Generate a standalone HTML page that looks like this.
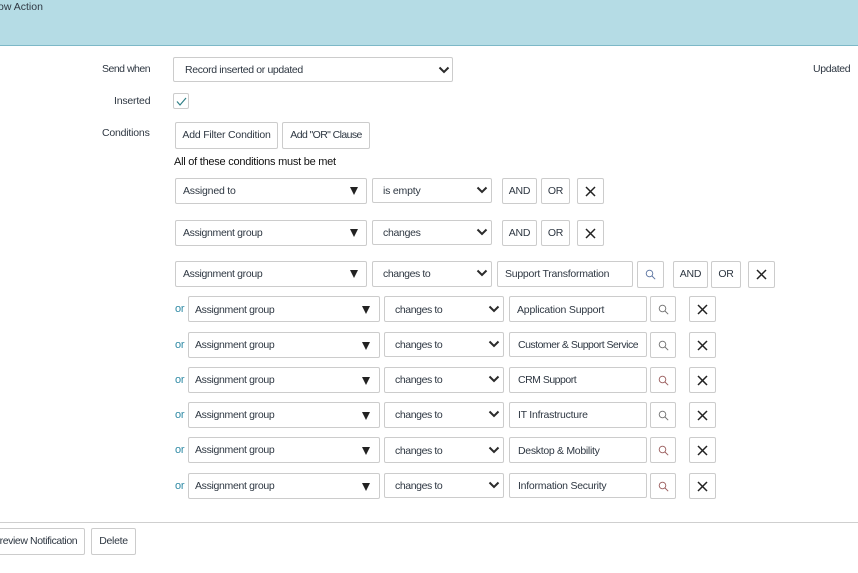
<!DOCTYPE html>
<html><head><meta charset="utf-8"><style>
html,body{margin:0;padding:0;background:#fff;width:858px;height:573px;overflow:hidden}
body{position:relative;font-family:"Liberation Sans",sans-serif;font-size:10.5px;color:#2e3742;letter-spacing:-.2px}
.a,.b,.t,svg{position:absolute}
.b{box-sizing:border-box;border:1px solid #cccccc;border-radius:2px;background:#fff;white-space:nowrap;overflow:hidden}
.t{white-space:nowrap;line-height:14px}
.c{text-align:center}
.ag{letter-spacing:-.33px}
.ch{letter-spacing:-.4px}
.o{color:#2f8aa5;font-size:11px}
</style></head><body>
<div class="a" style="left:0;top:0;width:858px;height:46px;box-sizing:border-box;background:#b5dce5;border-bottom:1px solid #7db8c7"></div>
<div class="t" style="left:-2px;top:0;letter-spacing:0">ow Action</div>
<div class="t" style="left:102px;top:62px;letter-spacing:-.5px">Send when</div>
<div class="t" style="left:114px;top:94px">Inserted</div>
<div class="t" style="left:102px;top:126px">Conditions</div>
<div class="t" style="left:813px;top:62px;letter-spacing:-.35px">Updated</div>

<div class="b" style="left:173px;top:57px;width:280px;height:25px"></div>
<div class="t" style="left:185px;top:63px;letter-spacing:-.36px">Record inserted or updated</div>
<svg style="left:438px;top:66px" width="12" height="8"><path d="M1.5 1.5L6 6l4.5-4.5" fill="none" stroke="#2b2b2b" stroke-width="2"/></svg>

<div class="b" style="left:173px;top:93px;width:16px;height:16px"></div>
<svg style="left:175px;top:96px" width="13" height="11"><path d="M2 5.5L5 9l6-7" fill="none" stroke="#2f7f86" stroke-width="1.2"/></svg>

<div class="b c" style="left:175px;top:122px;width:103px;height:27px;line-height:25px">Add Filter Condition</div>
<div class="b c" style="left:282px;top:122px;width:88px;height:27px;line-height:25px;letter-spacing:-.6px">Add "OR" Clause</div>
<div class="t" style="left:174px;top:155px;color:#111;font-size:11px;letter-spacing:-.25px">All of these conditions must be met</div>

<!-- Row 1 -->
<div class="b" style="left:175px;top:178px;width:192px;height:26px"></div><div class="t" style="left:183px;top:184px">Assigned to</div>
<svg style="left:349px;top:187px" width="10" height="8"><path d="M1 0h8L5 8z" fill="#222"/></svg>
<div class="b" style="left:372px;top:178px;width:120px;height:25px"></div><div class="t" style="left:383px;top:184px">is empty</div>
<svg style="left:476px;top:186px" width="12" height="8"><path d="M1.5 1.5L6 6l4.5-4.5" fill="none" stroke="#2b2b2b" stroke-width="2"/></svg>
<div class="b c" style="left:502px;top:178px;width:35px;height:26px;line-height:24px">AND</div>
<div class="b c" style="left:541px;top:178px;width:29px;height:26px;line-height:24px">OR</div>
<div class="b" style="left:577px;top:178px;width:27px;height:26px"></div>
<svg style="left:585px;top:186px" width="11" height="11"><path d="M1 1l9 9M10 1l-9 9" stroke="#222" stroke-width="1.5"/></svg>

<!-- Row 2 -->
<div class="b" style="left:175px;top:220px;width:192px;height:26px"></div><div class="t ag" style="left:183px;top:226px">Assignment group</div>
<svg style="left:349px;top:229px" width="10" height="8"><path d="M1 0h8L5 8z" fill="#222"/></svg>
<div class="b" style="left:372px;top:220px;width:120px;height:25px"></div><div class="t" style="left:383px;top:226px;letter-spacing:-.3px">changes</div>
<svg style="left:476px;top:228px" width="12" height="8"><path d="M1.5 1.5L6 6l4.5-4.5" fill="none" stroke="#2b2b2b" stroke-width="2"/></svg>
<div class="b c" style="left:502px;top:220px;width:35px;height:26px;line-height:24px">AND</div>
<div class="b c" style="left:541px;top:220px;width:29px;height:26px;line-height:24px">OR</div>
<div class="b" style="left:577px;top:220px;width:27px;height:26px"></div>
<svg style="left:585px;top:228px" width="11" height="11"><path d="M1 1l9 9M10 1l-9 9" stroke="#222" stroke-width="1.5"/></svg>

<!-- Row 3 -->
<div class="b" style="left:175px;top:261px;width:192px;height:26px"></div><div class="t ag" style="left:183px;top:267px">Assignment group</div>
<svg style="left:349px;top:270px" width="10" height="8"><path d="M1 0h8L5 8z" fill="#222"/></svg>
<div class="b" style="left:372px;top:261px;width:120px;height:26px"></div><div class="t ch" style="left:383px;top:267px">changes to</div>
<svg style="left:476px;top:269px" width="12" height="8"><path d="M1.5 1.5L6 6l4.5-4.5" fill="none" stroke="#2b2b2b" stroke-width="2"/></svg>
<div class="b" style="left:497px;top:261px;width:136px;height:26px"></div><div class="t" style="left:505px;top:267px;letter-spacing:-.25px">Support Transformation</div>
<div class="b" style="left:637px;top:261px;width:27px;height:27px"></div>
<svg style="left:645px;top:269px" width="11" height="11"><circle cx="4.5" cy="4.5" r="3.3" fill="none" stroke="#5a73a0" stroke-width=".9"/><path d="M7 7l3.2 3.2" stroke="#5a73a0" stroke-width=".9"/></svg>
<div class="b c" style="left:673px;top:261px;width:35px;height:27px;line-height:25px">AND</div>
<div class="b c" style="left:711px;top:261px;width:30px;height:27px;line-height:25px">OR</div>
<div class="b" style="left:748px;top:261px;width:27px;height:27px"></div>
<svg style="left:756px;top:269px" width="11" height="11"><path d="M1 1l9 9M10 1l-9 9" stroke="#222" stroke-width="1.5"/></svg>

<!-- Row 4 -->
<div class="t o" style="left:175px;top:302px">or</div>
<div class="b" style="left:188px;top:296px;width:192px;height:26px"></div><div class="t ag" style="left:195px;top:303px">Assignment group</div>
<svg style="left:361px;top:306px" width="10" height="8"><path d="M1 0h8L5 8z" fill="#222"/></svg>
<div class="b" style="left:384px;top:296px;width:120px;height:26px"></div><div class="t ch" style="left:395px;top:303px">changes to</div>
<svg style="left:488px;top:305px" width="12" height="8"><path d="M1.5 1.5L6 6l4.5-4.5" fill="none" stroke="#2b2b2b" stroke-width="2"/></svg>
<div class="b" style="left:509px;top:296px;width:138px;height:26px"></div><div class="t" style="left:517px;top:303px">Application Support</div>
<div class="b" style="left:650px;top:296px;width:26px;height:26px"></div>
<svg style="left:658px;top:304px" width="11" height="11"><circle cx="4.5" cy="4.5" r="3.3" fill="none" stroke="#707070" stroke-width=".9"/><path d="M7 7l3.2 3.2" stroke="#707070" stroke-width=".9"/></svg>
<div class="b" style="left:689px;top:296px;width:27px;height:26px"></div>
<svg style="left:697px;top:304px" width="11" height="11"><path d="M1 1l9 9M10 1l-9 9" stroke="#222" stroke-width="1.5"/></svg>

<!-- Row 5 -->
<div class="t o" style="left:175px;top:338px">or</div>
<div class="b" style="left:188px;top:332px;width:192px;height:26px"></div><div class="t ag" style="left:195px;top:338px">Assignment group</div>
<svg style="left:361px;top:342px" width="10" height="8"><path d="M1 0h8L5 8z" fill="#222"/></svg>
<div class="b" style="left:384px;top:332px;width:120px;height:25px"></div><div class="t ch" style="left:395px;top:338px">changes to</div>
<svg style="left:488px;top:340px" width="12" height="8"><path d="M1.5 1.5L6 6l4.5-4.5" fill="none" stroke="#2b2b2b" stroke-width="2"/></svg>
<div class="b" style="left:509px;top:332px;width:138px;height:25px"></div><div class="t" style="left:518px;top:338px;width:120px;overflow:hidden;letter-spacing:-.5px">Customer &amp; Support Services</div>
<div class="b" style="left:650px;top:332px;width:26px;height:26px"></div>
<svg style="left:658px;top:340px" width="11" height="11"><circle cx="4.5" cy="4.5" r="3.3" fill="none" stroke="#707070" stroke-width=".9"/><path d="M7 7l3.2 3.2" stroke="#707070" stroke-width=".9"/></svg>
<div class="b" style="left:689px;top:332px;width:27px;height:26px"></div>
<svg style="left:697px;top:340px" width="11" height="11"><path d="M1 1l9 9M10 1l-9 9" stroke="#222" stroke-width="1.5"/></svg>

<!-- Row 6 -->
<div class="t o" style="left:175px;top:373px">or</div>
<div class="b" style="left:188px;top:367px;width:192px;height:26px"></div><div class="t ag" style="left:195px;top:373px">Assignment group</div>
<svg style="left:361px;top:377px" width="10" height="8"><path d="M1 0h8L5 8z" fill="#222"/></svg>
<div class="b" style="left:384px;top:367px;width:120px;height:26px"></div><div class="t ch" style="left:395px;top:373px">changes to</div>
<svg style="left:488px;top:375px" width="12" height="8"><path d="M1.5 1.5L6 6l4.5-4.5" fill="none" stroke="#2b2b2b" stroke-width="2"/></svg>
<div class="b" style="left:509px;top:367px;width:138px;height:26px"></div><div class="t" style="left:518px;top:373px;letter-spacing:-.5px">CRM Support</div>
<div class="b" style="left:650px;top:367px;width:26px;height:26px"></div>
<svg style="left:658px;top:375px" width="11" height="11"><circle cx="4.5" cy="4.5" r="3.3" fill="none" stroke="#9a5c5c" stroke-width=".9"/><path d="M7 7l3.2 3.2" stroke="#9a5c5c" stroke-width=".9"/></svg>
<div class="b" style="left:689px;top:367px;width:27px;height:26px"></div>
<svg style="left:697px;top:375px" width="11" height="11"><path d="M1 1l9 9M10 1l-9 9" stroke="#222" stroke-width="1.5"/></svg>

<!-- Row 7 -->
<div class="t o" style="left:175px;top:408px">or</div>
<div class="b" style="left:188px;top:402px;width:192px;height:26px"></div><div class="t ag" style="left:195px;top:408px">Assignment group</div>
<svg style="left:361px;top:412px" width="10" height="8"><path d="M1 0h8L5 8z" fill="#222"/></svg>
<div class="b" style="left:384px;top:402px;width:120px;height:26px"></div><div class="t ch" style="left:395px;top:408px">changes to</div>
<svg style="left:488px;top:410px" width="12" height="8"><path d="M1.5 1.5L6 6l4.5-4.5" fill="none" stroke="#2b2b2b" stroke-width="2"/></svg>
<div class="b" style="left:509px;top:402px;width:138px;height:26px"></div><div class="t" style="left:518px;top:408px;letter-spacing:-.25px">IT Infrastructure</div>
<div class="b" style="left:650px;top:402px;width:26px;height:26px"></div>
<svg style="left:658px;top:410px" width="11" height="11"><circle cx="4.5" cy="4.5" r="3.3" fill="none" stroke="#707070" stroke-width=".9"/><path d="M7 7l3.2 3.2" stroke="#707070" stroke-width=".9"/></svg>
<div class="b" style="left:689px;top:402px;width:27px;height:26px"></div>
<svg style="left:697px;top:410px" width="11" height="11"><path d="M1 1l9 9M10 1l-9 9" stroke="#222" stroke-width="1.5"/></svg>

<!-- Row 8 -->
<div class="t o" style="left:175px;top:443px">or</div>
<div class="b" style="left:188px;top:437px;width:192px;height:26px"></div><div class="t ag" style="left:195px;top:443px">Assignment group</div>
<svg style="left:361px;top:447px" width="10" height="8"><path d="M1 0h8L5 8z" fill="#222"/></svg>
<div class="b" style="left:384px;top:437px;width:120px;height:26px"></div><div class="t ch" style="left:395px;top:444px">changes to</div>
<svg style="left:488px;top:446px" width="12" height="8"><path d="M1.5 1.5L6 6l4.5-4.5" fill="none" stroke="#2b2b2b" stroke-width="2"/></svg>
<div class="b" style="left:509px;top:437px;width:138px;height:26px"></div><div class="t" style="left:518px;top:444px;letter-spacing:-.3px">Desktop &amp; Mobility</div>
<div class="b" style="left:650px;top:437px;width:26px;height:26px"></div>
<svg style="left:658px;top:445px" width="11" height="11"><circle cx="4.5" cy="4.5" r="3.3" fill="none" stroke="#9a5c5c" stroke-width=".9"/><path d="M7 7l3.2 3.2" stroke="#9a5c5c" stroke-width=".9"/></svg>
<div class="b" style="left:689px;top:437px;width:27px;height:26px"></div>
<svg style="left:697px;top:445px" width="11" height="11"><path d="M1 1l9 9M10 1l-9 9" stroke="#222" stroke-width="1.5"/></svg>

<!-- Row 9 -->
<div class="t o" style="left:175px;top:479px">or</div>
<div class="b" style="left:188px;top:473px;width:192px;height:26px"></div><div class="t ag" style="left:195px;top:479px">Assignment group</div>
<svg style="left:361px;top:483px" width="10" height="8"><path d="M1 0h8L5 8z" fill="#222"/></svg>
<div class="b" style="left:384px;top:473px;width:120px;height:25px"></div><div class="t ch" style="left:395px;top:479px">changes to</div>
<svg style="left:488px;top:481px" width="12" height="8"><path d="M1.5 1.5L6 6l4.5-4.5" fill="none" stroke="#2b2b2b" stroke-width="2"/></svg>
<div class="b" style="left:509px;top:473px;width:138px;height:25px"></div><div class="t" style="left:518px;top:479px;letter-spacing:-.25px">Information Security</div>
<div class="b" style="left:650px;top:473px;width:26px;height:26px"></div>
<svg style="left:658px;top:481px" width="11" height="11"><circle cx="4.5" cy="4.5" r="3.3" fill="none" stroke="#9a5c5c" stroke-width=".9"/><path d="M7 7l3.2 3.2" stroke="#9a5c5c" stroke-width=".9"/></svg>
<div class="b" style="left:689px;top:473px;width:27px;height:26px"></div>
<svg style="left:697px;top:481px" width="11" height="11"><path d="M1 1l9 9M10 1l-9 9" stroke="#222" stroke-width="1.5"/></svg>

<!-- Footer -->
<div class="a" style="left:0;top:522px;width:858px;height:1px;background:#cfcfcf"></div>
<div class="b" style="left:-20px;top:528px;width:105px;height:27px"></div>
<div class="t" style="left:-7px;top:534px;letter-spacing:-.4px">Preview Notification</div>
<div class="b c" style="left:91px;top:528px;width:45px;height:27px;line-height:25px;letter-spacing:-.3px">Delete</div>
</body></html>
